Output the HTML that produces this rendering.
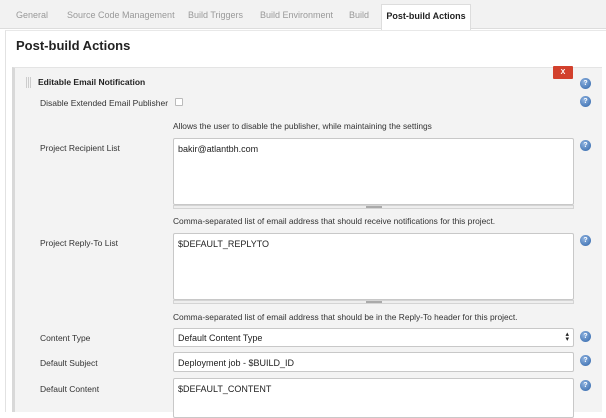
<!DOCTYPE html>
<html><head><style>
*{box-sizing:border-box;margin:0;padding:0}
body{width:606px;height:412px;overflow:hidden;background:#fff;font-family:"Liberation Sans",Arial,sans-serif;font-size:9px;color:#333;position:relative}
.abs{position:absolute}
.tabbar{left:0;top:0;width:606px;height:29px;background:#f2f2f2;border-bottom:1px solid #ddd}
.tab{position:absolute;top:10px;color:#999;font-size:9px}
.active{position:absolute;left:381px;top:4px;width:90px;height:26px;background:#fff;border:1px solid #ddd;border-bottom:none;font-weight:bold;color:#222;text-align:center;padding-top:6px}
.page{left:5px;top:30px;width:601px;height:382px;border-left:1px solid #e2e2e2;border-top:1px solid #e8e8e8}
h1{position:absolute;left:16px;top:38px;font-size:13px;font-weight:bold;color:#222}
.panel{left:12px;top:67px;width:590px;height:345px;background:#f3f3f3;border-left:3px solid #d8d8d8;border-top:1px solid #e4e4e4}
.lbl{position:absolute;left:40px;font-size:8.5px;color:#333}
.desc{position:absolute;left:173px;font-size:8.4px;color:#333}
.ta{position:absolute;left:173px;width:401px;background:#fff;border:1px solid #c8c8c8;border-radius:2px;padding:5px 4px;font-size:9px;color:#222}
.grip{position:absolute;left:173px;width:401px;height:4px;background:#eee;border:1px solid #d4d4d4}
.grip:after{content:"";position:absolute;left:192px;top:0;width:16px;height:2px;background:#aaa}
.help{position:absolute;left:580px;width:11px;height:11px;border-radius:50%;background:radial-gradient(circle at 40% 35%,#8fb3e0,#2d63a8);color:#fff;font-size:7px;font-weight:bold;text-align:center;line-height:11px}
</style></head><body>
<div class="abs tabbar">
<span class="tab" style="left:16px">General</span>
<span class="tab" style="left:67px">Source Code Management</span>
<span class="tab" style="left:188px">Build Triggers</span>
<span class="tab" style="left:260px">Build Environment</span>
<span class="tab" style="left:349px">Build</span>
<div class="active">Post-build Actions</div>
</div>
<div class="abs page"></div>
<h1>Post-build Actions</h1>
<div class="abs panel"></div>
<div class="abs" style="left:26px;top:77px;width:6px;height:11px;background:repeating-linear-gradient(90deg,#ccc 0 1px,transparent 1px 2px)"></div>
<div class="abs" style="left:38px;top:77px;font-weight:bold;color:#222;font-size:8.5px">Editable Email Notification</div>
<div class="abs" style="left:553px;top:66px;width:20px;height:13px;background:#d2402c;color:#fff;font-size:7px;font-weight:bold;text-align:center;line-height:13px;border-radius:1px">X</div>
<div class="help" style="top:78px">?</div>
<div class="lbl" style="top:98px">Disable Extended Email Publisher</div>
<div class="abs" style="left:175px;top:98px;width:8px;height:8px;border:1px solid #bbb;background:#fff;border-radius:1px"></div>
<div class="help" style="top:96px">?</div>
<div class="desc" style="top:121px">Allows the user to disable the publisher, while maintaining the settings</div>
<div class="lbl" style="top:143px">Project Recipient List</div>
<div class="ta" style="top:138px;height:67px">bakir@atlantbh.com</div>
<div class="grip" style="top:205px"></div>
<div class="help" style="top:140px">?</div>
<div class="desc" style="top:216px">Comma-separated list of email address that should receive notifications for this project.</div>
<div class="lbl" style="top:238px">Project Reply-To List</div>
<div class="ta" style="top:233px;height:67px">$DEFAULT_REPLYTO</div>
<div class="grip" style="top:300px"></div>
<div class="help" style="top:235px">?</div>
<div class="desc" style="top:312px">Comma-separated list of email address that should be in the Reply-To header for this project.</div>
<div class="lbl" style="top:333px">Content Type</div>
<div class="ta" style="top:328px;height:19px;padding-top:4px">Default Content Type<span style="position:absolute;right:4px;top:3px;font-size:7px;line-height:5px">▴<br>▾</span></div>
<div class="help" style="top:331px">?</div>
<div class="lbl" style="top:358px">Default Subject</div>
<div class="ta" style="top:352px;height:20px;padding-top:5px">Deployment job - $BUILD_ID</div>
<div class="help" style="top:355px">?</div>
<div class="lbl" style="top:384px">Default Content</div>
<div class="ta" style="top:378px;height:40px">$DEFAULT_CONTENT</div>
<div class="help" style="top:380px">?</div>
</body></html>
